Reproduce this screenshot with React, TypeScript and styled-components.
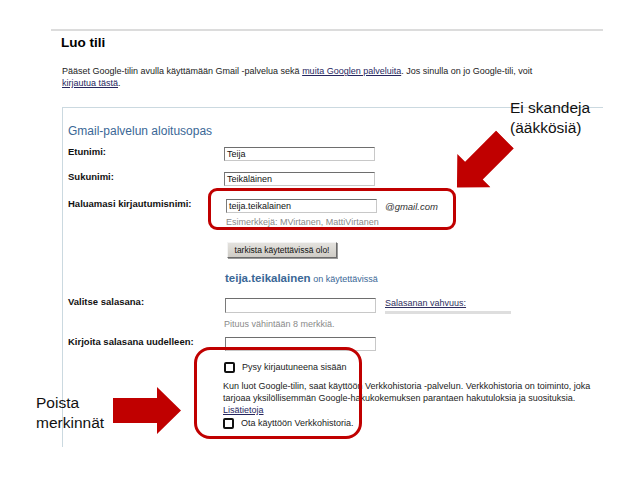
import styled, { createGlobalStyle } from 'styled-components'

const GlobalStyle = createGlobalStyle`
  html, body { margin: 0; padding: 0; background: #fff; }
  body { font-family: 'Liberation Sans', Arial, sans-serif; color: #000; }
`

const RED = '#c00000'

const Page = styled.div`
  position: relative;
  width: 638px;
  height: 478px;
  overflow: hidden;
  background: #fff;
  padding-top: 29px;
  box-sizing: border-box;
`
const TopRule = styled.div`
  margin-left: 51px;
  width: 552px;
  height: 2px;
  background: #dcdcdc;
`
const Title = styled.h1`
  margin: 4px 0 0 61px;
  font-size: 13.5px;
  line-height: 16px;
  font-weight: bold;
`
const Intro = styled.p`
  margin: 14px 0 0 62px;
  font-size: 9px;
  line-height: 12px;
  color: #222;
`
const Link = styled.a`
  color: #26265e;
  text-decoration: underline;
`
const Panel = styled.div`
  margin: 18px 0 0 62px;
  width: 541px;
  height: 340px;
  box-sizing: border-box;
  border-top: 1px solid #cbd9e0;
  border-left: 1px solid #cbd9e0;
  padding-left: 5px;
`
const Heading = styled.h2`
  margin: 16px 0 0;
  font-size: 12px;
  line-height: 14px;
  font-weight: normal;
  color: #3a6796;
`
const Row = styled.div<{ $top: number }>`
  display: grid;
  grid-template-columns: 156px auto;
  align-items: start;
  margin-top: ${p => p.$top}px;
`
const Label = styled.div`
  font-size: 9.5px;
  line-height: 10px;
  font-weight: bold;
  color: #111;
`
const Field = styled.div<{ $shift?: number }>`
  display: flex;
  align-items: center;
  gap: 8px;
  margin-left: ${p => p.$shift ?? 0}px;
`
const Input = styled.div<{ $h?: number }>`
  width: 151px;
  height: ${p => p.$h ?? 14}px;
  box-sizing: border-box;
  border: 1px solid;
  border-color: #6e6e6e #c8c8c8 #c8c8c8 #7a7a7a;
  background: #fff;
  font-size: 9px;
  line-height: 12px;
  padding-left: 2px;
  color: #111;
`
const Domain = styled.span`
  font-size: 9.5px;
  font-style: italic;
  color: #333;
`
const Below = styled.div<{ $top: number; $shift?: number }>`
  margin: ${p => p.$top}px 0 0 ${p => 156 + (p.$shift ?? 0)}px;
`
const Hint = styled.div`
  font-size: 9px;
  line-height: 12px;
  color: #8a8a8a;
`
const Button = styled.button`
  display: block;
  height: 16px;
  width: 110px;
  padding: 0;
  font-family: inherit;
  font-size: 8.5px;
  color: #111;
  background: linear-gradient(#e4e2de, #cfccc6);
  border: 1px solid;
  border-color: #f4f4f4 #6a6a6a #6a6a6a #f4f4f4;
  box-shadow: 1px 1px 0 #9a9a9a;
`
const Available = styled.div`
  font-size: 9px;
  line-height: 14px;
  color: #3a6796;
  b {
    font-size: 11.5px;
  }
`
const Strength = styled.div`
  display: flex;
  flex-direction: column;
  gap: 2px;
  margin-left: 1px;
  margin-top: 1px;
`
const StrengthLink = styled(Link)`
  font-size: 9px;
  line-height: 11px;
  color: #2e2e60;
`
const StrengthBar = styled.div`
  width: 126px;
  height: 3px;
  background: #dedede;
`
const CheckRow = styled.div`
  display: flex;
  align-items: center;
  gap: 7px;
  font-size: 9px;
  line-height: 14px;
  color: #222;
`
const Box = styled.span`
  width: 11px;
  height: 11px;
  box-sizing: border-box;
  border: 2px solid #111;
  border-radius: 2px;
  flex: none;
`
const History = styled.p`
  margin: 0;
  font-size: 9px;
  line-height: 12px;
  color: #222;
`
const RedFrame = styled.div<{ $x: number; $y: number; $w: number; $h: number; $r: number }>`
  position: absolute;
  left: ${p => p.$x}px;
  top: ${p => p.$y}px;
  width: ${p => p.$w}px;
  height: ${p => p.$h}px;
  box-sizing: border-box;
  border: 3px solid ${RED};
  border-radius: ${p => p.$r}px;
`
const ArrowSvg = styled.svg<{ $x: number; $y: number; $rot: number }>`
  position: absolute;
  left: ${p => p.$x}px;
  top: ${p => p.$y}px;
  transform: rotate(${p => p.$rot}deg);
`
const Note = styled.div<{ $x: number; $y: number }>`
  position: absolute;
  left: ${p => p.$x}px;
  top: ${p => p.$y}px;
  font-size: 15.5px;
  line-height: 20px;
  color: #111;
`

const Arrow = ({ x, y, rot }: { x: number; y: number; rot: number }) => (
  <ArrowSvg $x={x} $y={y} $rot={rot} width="68" height="47" viewBox="0 0 68 47">
    <polygon points="0,11 44,11 44,0 68,23.5 44,47 44,36 0,36" fill={RED} />
  </ArrowSvg>
)

export default function App() {
  return (
    <Page>
      <GlobalStyle />
      <TopRule />
      <Title>Luo tili</Title>
      <Intro>
        Pääset Google-tilin avulla käyttämään Gmail -palvelua sekä <Link>muita Googlen palveluita</Link>. Jos
        sinulla on jo Google-tili, voit
        <br />
        <Link>kirjautua tästä</Link>.
      </Intro>
      <Panel>
        <Heading>Gmail-palvelun aloitusopas</Heading>
        <Row $top={9}>
          <Label>Etunimi:</Label>
          <Field>
            <Input>Teija</Input>
          </Field>
        </Row>
        <Row $top={11}>
          <Label>Sukunimi:</Label>
          <Field>
            <Input>Teikäläinen</Input>
          </Field>
        </Row>
        <Row $top={13}>
          <Label>Haluamasi kirjautumisnimi:</Label>
          <Field $shift={2}>
            <Input>teija.teikalainen</Input>
            <Domain>@gmail.com</Domain>
          </Field>
        </Row>
        <Below $top={3} $shift={2}>
          <Hint>Esimerkkejä: MVirtanen, MattiVirtanen</Hint>
        </Below>
        <Below $top={14} $shift={3}>
          <Button>tarkista käytettävissä olo!</Button>
        </Below>
        <Below $top={13} $shift={1}>
          <Available>
            <b>teija.teikalainen</b> on käytettävissä
          </Available>
        </Below>
        <Row $top={11}>
          <Label>Valitse salasana:</Label>
          <Field $shift={1}>
            <Input $h={15} />
            <Strength>
              <StrengthLink>Salasanan vahvuus:</StrengthLink>
              <StrengthBar />
            </Strength>
          </Field>
        </Row>
        <Below $top={4}>
          <Hint>Pituus vähintään 8 merkkiä.</Hint>
        </Below>
        <Row $top={7}>
          <Label>Kirjoita salasana uudelleen:</Label>
          <Field $shift={1}>
            <Input />
          </Field>
        </Row>
        <Below $top={9}>
          <CheckRow>
            <Box />
            Pysy kirjautuneena sisään
          </CheckRow>
        </Below>
        <Below $top={6} $shift={-1}>
          <History>
            Kun luot Google-tilin, saat käyttöön Verkkohistoria -palvelun. Verkkohistoria on toiminto, joka
            <br />
            tarjoaa yksilöllisemmän Google-hakukokemuksen parantaen hakutuloksia ja suosituksia.
            <br />
            <Link>Lisätietoja</Link>
          </History>
          <CheckRow>
            <Box />
            Ota käyttöön Verkkohistoria.
          </CheckRow>
        </Below>
      </Panel>

      <RedFrame $x={208} $y={188} $w={248} $h={42} $r={9} />
      <RedFrame $x={194} $y={347} $w={168} $h={92} $r={16} />
      <Arrow x={447} y={140} rot={135} />
      <Arrow x={113} y={387} rot={0} />
      <Note $x={510} $y={98}>
        Ei skandeja
        <br />
        (ääkkösiä)
      </Note>
      <Note $x={36} $y={393}>
        Poista
        <br />
        merkinnät
      </Note>
    </Page>
  )
}
